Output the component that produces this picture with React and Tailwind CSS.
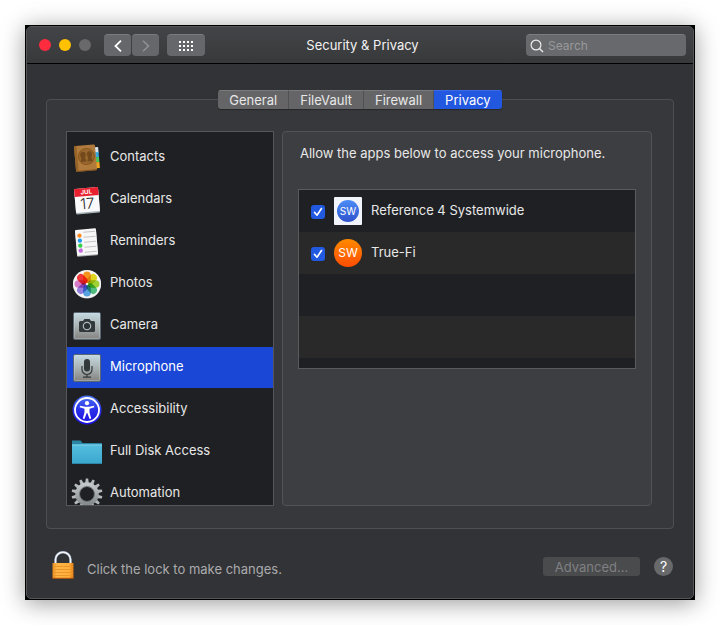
import React, { useState } from "react";
import clsx from "clsx";

function ContactsIcon() {
  return (
    <svg viewBox="0 0 32 32" className="size-8">
      <g transform="rotate(-5 16 16)">
        <rect x="24" y="6" width="4" height="6" fill="#d8e4ea" />
        <rect x="24" y="11" width="4" height="5" fill="#35a9e0" />
        <rect x="24" y="16" width="4" height="5" fill="#4cc35c" />
        <rect x="24" y="21" width="4" height="6" fill="#f0a51e" />
        <rect x="4" y="3" width="21" height="26" rx="1.500" fill="#b07a3c" />
        <rect x="4" y="3" width="2.500" height="26" rx="1" fill="#976428" />
        <path d="M5 28.500h19" stroke="#7c5020" strokeWidth="1" />
        <circle cx="15.500" cy="14.500" r="8" fill="#99682f" stroke="#87581f" />
        <path
          d="M12.500 9.500c2 0 2.800 1.600 2.500 3.500-.2 1.500-.8 2-.8 3 0 1 1 1.200 1 3.500h-5.700c0-2.500.7-2.500.7-3.700 0-1-.8-1.500-.8-3.200 0-2 1.200-3.100 3.100-3.100zM18.500 9.500c2.200 0 3 1.600 2.800 3.500-.2 1.500-.9 2-.9 3 0 1 1 1.500 1 3.500h-5.200c0-2.500.8-2.500.8-3.700 0-1-.8-1.500-.8-3.200 0-2 .6-3.100 2.300-3.100z"
          fill="#744a1c"
        />
      </g>
    </svg>
  );
}

function CalendarIcon() {
  return (
    <svg viewBox="0 0 32 32" className="size-8">
      <g transform="rotate(-5 16 16)">
        <rect x="4" y="5" width="24" height="24.500" rx="1" fill="#a4b0b6" />
        <rect x="4" y="4" width="24" height="24" rx="1" fill="#fafafa" />
        <path d="M5 4h22a1 1 0 0 1 1 1v7H4V5a1 1 0 0 1 1-1z" fill="#e9202f" />
        <text
          x="16"
          y="10"
          textAnchor="middle"
          fill="#fff"
          className="font-[Inter,sans-serif] text-[6px] font-bold"
        >
          JUL
        </text>
        <text
          x="16"
          y="25"
          textAnchor="middle"
          fill="#2a2a2a"
          className="font-[Inter,sans-serif] text-[15px] font-light"
        >
          17
        </text>
      </g>
    </svg>
  );
}

function RemindersIcon() {
  const dots = ["#ff8a1e", "#1e9bf6", "#35d04b", "#c56be0"];
  return (
    <svg viewBox="0 0 32 32" className="size-8">
      <g transform="rotate(-5 16 16)">
        <rect x="5" y="4" width="21" height="26" rx="1" fill="#a5a7aa" />
        <rect x="5" y="3" width="21" height="26" rx="1" fill="#f7f7f7" />
        {dots.map((color, i) => (
          <g key={color}>
            <circle cx="9" cy={9 + i * 5} r="2.200" fill={color} />
            <path
              d={`M13 ${11 + i * 5}h12`}
              stroke="#c4c4c4"
              strokeWidth="1"
            />
          </g>
        ))}
        <path d="M13 6h12" stroke="#c4c4c4" strokeWidth="1" />
      </g>
    </svg>
  );
}

function PhotosIcon() {
  const petals = [
    "#ff9a1f",
    "#e8dc20",
    "#a5d837",
    "#52c482",
    "#5aa7e8",
    "#9a85e4",
    "#dd80cf",
    "#f93a3a",
  ];
  return (
    <svg viewBox="0 0 32 32" className="isolate size-8">
      <circle cx="16" cy="16.500" r="14" fill="#b9bbbe" />
      <circle cx="16" cy="16" r="14" fill="#f6f6f6" />
      {petals.map((color, i) => (
        <rect
          key={color}
          x="12.200"
          y="3.500"
          width="7.600"
          height="11.500"
          rx="3.800"
          fill={color}
          className="mix-blend-multiply"
          transform={`rotate(${i * 45} 16 16)`}
        />
      ))}
    </svg>
  );
}

function MetalTile({ children }) {
  return (
    <svg viewBox="0 0 32 32" className="size-8">
      <defs>
        <linearGradient id="metal" x1="0" y1="0" x2="0" y2="1">
          <stop offset="0" stopColor="#c5dbe3" />
          <stop offset="0.5" stopColor="#a9b2b3" />
          <stop offset="1" stopColor="#83827f" />
        </linearGradient>
      </defs>
      <rect
        x="2.500"
        y="2.500"
        width="27"
        height="27"
        rx="1.500"
        fill="url(#metal)"
        stroke="#596673"
      />
      <rect
        x="3.500"
        y="3.500"
        width="25"
        height="25"
        rx="1"
        fill="none"
        stroke="#d5e2e6"
        strokeOpacity="0.3"
      />
      {children}
    </svg>
  );
}

function CameraIcon() {
  return (
    <MetalTile>
      <path
        d="M9.500 11h2.500l1.500-2h5l1.500 2h2.500a1.500 1.500 0 0 1 1.500 1.500v8a1.500 1.500 0 0 1-1.500 1.500h-13A1.500 1.500 0 0 1 8 20.500v-8A1.500 1.500 0 0 1 9.500 11z"
        fill="#33383b"
      />
      <circle cx="16" cy="16" r="3.700" fill="#2c3133" stroke="#aebcc0" strokeWidth="1.200" />
    </MetalTile>
  );
}

function MicrophoneIcon() {
  return (
    <MetalTile>
      <rect x="13" y="7" width="6" height="12.500" rx="3" fill="#33383b" />
      <path
        d="M11 14v3.500a5 5 0 0 0 10 0V14M16 22.500V25M12 25.200h8"
        fill="none"
        stroke="#33383b"
        strokeWidth="1.200"
      />
    </MetalTile>
  );
}

function AccessibilityIcon() {
  return (
    <svg viewBox="0 0 32 32" className="size-8">
      <defs>
        <linearGradient id="access" x1="0" y1="0" x2="0" y2="1">
          <stop offset="0" stopColor="#4a74f2" />
          <stop offset="0.5" stopColor="#2a2fe8" />
          <stop offset="1" stopColor="#1a10e0" />
        </linearGradient>
      </defs>
      <circle cx="16" cy="16" r="14.500" fill="url(#access)" />
      <circle cx="16" cy="16" r="12" fill="none" stroke="#fff" strokeWidth="1.800" />
      <circle cx="16" cy="9.200" r="2.100" fill="#fff" />
      <path
        d="M9 11.800l5 1h4l5-1 .3 1.500-4.800 1.400v3.500l1.700 6.300-1.600.5-2.300-6h-.6l-2.300 6-1.600-.5 1.700-6.300v-3.500l-4.800-1.400z"
        fill="#fff"
      />
    </svg>
  );
}

function FolderIcon() {
  return (
    <svg viewBox="0 0 32 32" className="size-8">
      <defs>
        <linearGradient id="folder" x1="0" y1="0" x2="0" y2="1">
          <stop offset="0" stopColor="#56bfe0" />
          <stop offset="1" stopColor="#3ba6cd" />
        </linearGradient>
      </defs>
      <path d="M1 4.500h8.500l2 2.500H31v6H1z" fill="#2c84a5" />
      <rect x="1" y="8.500" width="30" height="19.500" fill="url(#folder)" />
      <path d="M1 9h30" stroke="#7fd3ec" strokeWidth="1" />
      <path d="M1 27.500h30" stroke="#2b86a8" strokeWidth="1" />
    </svg>
  );
}

function GearIcon() {
  const teeth = Array.from({ length: 14 }, (_, i) => (i * 360) / 14);
  return (
    <svg viewBox="0 0 32 32" className="size-8">
      <defs>
        <linearGradient id="gear" x1="0" y1="0" x2="0" y2="1">
          <stop offset="0" stopColor="#c3c7c9" />
          <stop offset="1" stopColor="#878c8f" />
        </linearGradient>
      </defs>
      {teeth.map((angle) => (
        <path
          key={angle}
          d="M14.200 5l.6-4.500h2.400l.6 4.500z"
          fill="#b3b8ba"
          transform={`rotate(${angle} 16 16)`}
        />
      ))}
      <circle cx="16" cy="16" r="9.500" fill="none" stroke="url(#gear)" strokeWidth="4.500" />
      <circle cx="16" cy="16" r="7.500" fill="none" stroke="#6d7275" strokeWidth="1" />
    </svg>
  );
}

function SystemwideLogo() {
  return (
    <svg viewBox="0 0 28 28" className="size-7">
      <defs>
        <linearGradient id="sw-blue" x1="0" y1="0" x2="0" y2="1">
          <stop offset="0" stopColor="#4b8df8" />
          <stop offset="1" stopColor="#2f52cc" />
        </linearGradient>
      </defs>
      <rect width="28" height="28" rx="1" fill="#f1f4fa" />
      <circle cx="14" cy="14" r="11" fill="url(#sw-blue)" />
      <text
        x="14"
        y="18"
        textAnchor="middle"
        fill="#fff"
        className="font-[Inter,sans-serif] text-[10px] font-normal"
      >
        SW
      </text>
    </svg>
  );
}

function TrueFiLogo() {
  return (
    <svg viewBox="0 0 28 28" className="size-7">
      <defs>
        <linearGradient id="sw-orange" x1="0" y1="0" x2="0" y2="1">
          <stop offset="0" stopColor="#ff8a00" />
          <stop offset="1" stopColor="#ff4d00" />
        </linearGradient>
      </defs>
      <circle cx="14" cy="14" r="14" fill="url(#sw-orange)" />
      <text
        x="14"
        y="18"
        textAnchor="middle"
        fill="#fff"
        className="font-[Inter,sans-serif] text-[12px] font-normal"
      >
        SW
      </text>
    </svg>
  );
}

function LockIcon() {
  return (
    <svg viewBox="0 0 22 28" className="h-7 w-[22px]">
      <defs>
        <linearGradient id="lock" x1="0" y1="0" x2="1" y2="0">
          <stop offset="0" stopColor="#e88a1c" />
          <stop offset="0.2" stopColor="#ffb648" />
          <stop offset="0.8" stopColor="#ffad3b" />
          <stop offset="1" stopColor="#e07a10" />
        </linearGradient>
      </defs>
      <path
        d="M3.500 13V8.500a7.500 7.300 0 0 1 15 0V13"
        fill="none"
        stroke="#8493a8"
        strokeWidth="2.600"
      />
      <path
        d="M3.500 13V8.500a7.500 7.300 0 0 1 15 0V13"
        fill="none"
        stroke="#f2f6fb"
        strokeWidth="1.500"
      />
      <rect x="0.500" y="12" width="21" height="15.500" rx="0.500" fill="url(#lock)" />
      <path
        d="M1 15.500h20M1 18.500h20M1 21.500h20M1 24.500h20"
        stroke="#ea9628"
        strokeWidth="1"
      />
      <path d="M0.500 27.300h21" stroke="#a34b08" strokeWidth="1" />
    </svg>
  );
}

const tabs = ["General", "FileVault", "Firewall", "Privacy"];

const categories = [
  { name: "Contacts", Icon: ContactsIcon },
  { name: "Calendars", Icon: CalendarIcon },
  { name: "Reminders", Icon: RemindersIcon },
  { name: "Photos", Icon: PhotosIcon },
  { name: "Camera", Icon: CameraIcon },
  { name: "Microphone", Icon: MicrophoneIcon },
  { name: "Accessibility", Icon: AccessibilityIcon },
  { name: "Full Disk Access", Icon: FolderIcon },
  { name: "Automation", Icon: GearIcon },
];

const apps = [
  { id: "systemwide", name: "Reference 4 Systemwide", Logo: SystemwideLogo },
  { id: "truefi", name: "True-Fi", Logo: TrueFiLogo },
];

function TitleBar() {
  const toolButton =
    "flex h-[22px] items-center justify-center rounded border-t border-[#7b7c7f] bg-[#66676a]";

  return (
    <header className="flex h-[37px] shrink-0 items-center border-b border-black bg-linear-to-b from-[#434447] to-[#38393b]">
      <div className="flex flex-1 items-center gap-2 pl-3">
        <button aria-label="Close" className="size-3 rounded-full bg-[#ff2c3f]" />
        <button aria-label="Minimize" className="size-3 rounded-full bg-[#ffc100]" />
        <button aria-label="Zoom" className="size-3 rounded-full bg-[#69696c]" />
        <div className="ml-[5px] flex gap-px">
          <button aria-label="Back" className={clsx(toolButton, "w-[27px]")}>
            <svg viewBox="0 0 8 12" className="h-3 w-2">
              <path d="M7 0.700L1.500 6 7 11.300" fill="none" stroke="#fff" strokeWidth="1.800" />
            </svg>
          </button>
          <button aria-label="Forward" className={clsx(toolButton, "w-[27px]")}>
            <svg viewBox="0 0 8 12" className="h-3 w-2">
              <path d="M1 0.700L6.500 6 1 11.300" fill="none" stroke="#929396" strokeWidth="1.500" />
            </svg>
          </button>
        </div>
        <button aria-label="Show All" className={clsx(toolButton, "w-[38px]")}>
          <svg viewBox="0 0 14 10" className="h-2.5 w-3.5" fill="#fff">
            {[0, 4, 8].map((y) =>
              [0, 4, 8, 12].map((x) => (
                <rect key={`${x}-${y}`} x={x} y={y} width="2" height="2" />
              ))
            )}
          </svg>
        </button>
      </div>
      <h1 className="text-[#f2f2f2]">Security &amp; Privacy</h1>
      <div className="flex flex-1 justify-end pr-[7px]">
        <label className="flex h-[22px] w-40 items-center gap-1 rounded border-t border-[#7b7c7f] bg-[#68696c] pl-1">
          <svg viewBox="0 0 14 14" className="size-3.5 shrink-0">
            <circle cx="6" cy="6" r="4.900" fill="none" stroke="#ececec" strokeWidth="1.200" />
            <path d="M9.500 9.500L13 13" stroke="#ececec" strokeWidth="1.400" />
          </svg>
          <input
            type="search"
            aria-label="Search"
            placeholder="Search"
            className="w-full min-w-0 bg-transparent text-xs text-white outline-none placeholder:text-[#98999b]"
          />
        </label>
      </div>
    </header>
  );
}

function Sidebar({ selected, onSelect }) {
  return (
    <ul className="w-52 shrink-0 overflow-y-auto border border-[#55565a] bg-[#1f2023] pt-[5px] [scrollbar-width:none]">
      {categories.map(({ name, Icon }) => (
        <li key={name} className="h-[42px] pb-px">
          <button
            onClick={() => onSelect(name)}
            className={clsx(
              "flex h-full w-full items-center gap-[7px] pl-1 text-left",
              selected === name ? "bg-[#1a47d6] text-white" : "text-[#e8e8e8]"
            )}
          >
            <Icon />
            <span className="pb-[3px]">{name}</span>
          </button>
        </li>
      ))}
    </ul>
  );
}

function AppList() {
  const [allowed, setAllowed] = useState({ systemwide: true, truefi: true });

  return (
    <ul className="h-[180px] overflow-hidden border border-[#5a5b5e] bg-[#1f2023]">
      {apps.map(({ id, name, Logo }) => (
        <li key={id} className="even:bg-[#29292a]">
          <label className="flex h-[42px] items-center pl-3">
            <span className="mt-0.5 grid size-3.5 place-items-center">
              <input
                type="checkbox"
                checked={allowed[id]}
                onChange={() => setAllowed({ ...allowed, [id]: !allowed[id] })}
                className="col-start-1 row-start-1 size-3.5 appearance-none rounded-[3px] bg-[#58595c] checked:bg-[#2159e0]"
              />
              {allowed[id] && (
                <svg
                  viewBox="0 0 14 14"
                  className="pointer-events-none col-start-1 row-start-1 size-3.5"
                >
                  <path
                    d="M3.500 7.400l2.500 2.800 4.500-6.700"
                    fill="none"
                    stroke="#fff"
                    strokeWidth="1.600"
                    strokeLinecap="round"
                    strokeLinejoin="round"
                  />
                </svg>
              )}
            </span>
            <span className="ml-[9px]">
              <Logo />
            </span>
            <span className="ml-[9px] pb-[2px]">{name}</span>
          </label>
        </li>
      ))}
      <li className="h-[42px]" />
      <li className="h-[42px] bg-[#29292a]" />
    </ul>
  );
}

export default function App() {
  const [tab, setTab] = useState("Privacy");
  const [category, setCategory] = useState("Microphone");

  return (
    <div className="flex h-screen bg-white p-[25px] font-[Inter,'Liberation_Sans',sans-serif] text-[13px] leading-4 font-normal text-[#e8e8e8]">
      <div className="flex min-w-0 flex-1 border border-black bg-black shadow-[0_3px_22px_rgba(0,0,0,0.4)]">
        <div className="flex min-w-0 flex-1 flex-col overflow-hidden rounded-[5px] border border-[#55565a] bg-[#323336]">
          <TitleBar />

          <main className="flex min-h-0 flex-1 flex-col px-[19px] pt-[26px]">
            <nav className="z-10 -mb-2.5 flex h-[19px] self-center overflow-hidden rounded-[3px] shadow-[0_1px_1px_rgba(0,0,0,0.3)]">
              {tabs.map((name) => (
                <button
                  key={name}
                  onClick={() => setTab(name)}
                  className={clsx(
                    "flex items-center border-t px-[11px]",
                    tab === name
                      ? "border-[#3a69ea] bg-[#2257e0] text-white"
                      : "border-r border-t-[#7a7b7d] border-r-[#505154] bg-[#656567] last:border-r-0"
                  )}
                >
                  {name}
                </button>
              ))}
            </nav>

            <div className="flex min-h-0 flex-1 gap-2 rounded border border-[#4e4f53] bg-[#37383b] pt-[31px] pr-[21px] pb-[22px] pl-[19px]">
              <Sidebar selected={category} onSelect={setCategory} />
              <section className="min-w-0 flex-1 rounded border border-[#525356] bg-[#3d3e41] px-[15px] pt-[13px]">
                <p className="mb-7 pl-0.5">
                  Allow the apps below to access your microphone.
                </p>
                <AppList />
              </section>
            </div>
          </main>

          <footer className="flex h-[69px] shrink-0 items-center pt-1.5 pr-5 pl-[25px]">
            <button aria-label="Unlock" className="pb-1">
              <LockIcon />
            </button>
            <p className="ml-[13px] flex-1 pt-1 text-[#ababad]">
              Click the lock to make changes.
            </p>
            <button
              disabled
              className="h-[19px] w-[97px] rounded-[3px] bg-[#4a4b4d] text-[#7f8082]"
            >
              Advanced...
            </button>
            <button
              aria-label="Help"
              className="ml-[14px] size-[19px] rounded-full bg-[#68696b] text-sm leading-4 text-white"
            >
              ?
            </button>
          </footer>
        </div>
      </div>
    </div>
  );
}
